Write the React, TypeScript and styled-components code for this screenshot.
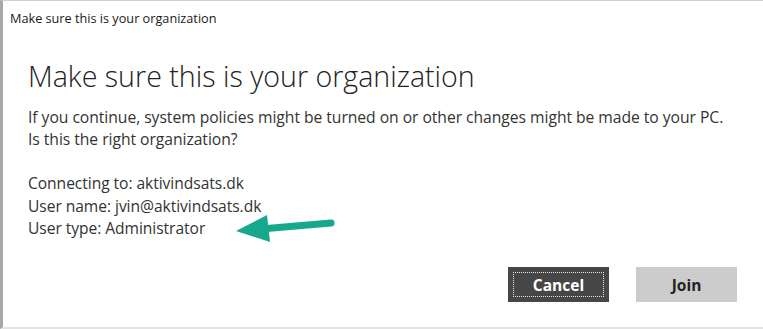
import React from "react";
import styled, { createGlobalStyle } from "styled-components";

const Global = createGlobalStyle`
  html, body { margin: 0; padding: 0; background: #fff; }
  body { font-family: "Open Sans", "Noto Sans", sans-serif; }
`;

const Window = styled.div`
  position: relative;
  width: 763px;
  height: 329px;
  box-sizing: border-box;
  border-left: 3px solid #a8a8a8;
  border-top: 1px solid #d0d0d0;
  border-bottom: 2px solid #e3e3e3;
  background: #fff;
  display: flex;
  flex-direction: column;
`;

const TitleBar = styled.div`
  height: 34px;
  padding: 8px 0 0 7px;
  box-sizing: border-box;
  font-size: 12.7px;
  color: #1a1a1a;
`;

const Body = styled.div`
  flex: 1;
  padding: 22px 0 0 25px;
  display: flex;
  flex-direction: column;
`;

const Heading = styled.h1`
  margin: 0;
  font-size: 28.6px;
  font-weight: 300;
  color: #222;
  line-height: 38px;
`;

const Para = styled.p`
  margin: 11px 0 0;
  font-size: 15.7px;
  line-height: 22px;
  color: #333;
  letter-spacing: -0.05px;
`;

const Info = styled.div`
  margin-top: 22px;
  font-size: 15.6px;
  line-height: 22.5px;
  color: #333;
  letter-spacing: -0.05px;
`;

const Footer = styled.div`
  display: flex;
  justify-content: flex-end;
  gap: 27px;
  padding: 0 26px 25px 0;
`;

const Button = styled.button<{ $primary?: boolean }>`
  width: 101px;
  height: 35px;
  border: none;
  font-family: "Open Sans", "Noto Sans", sans-serif;
  font-size: 15.5px;
  font-weight: 700;
  background: ${(p) => (p.$primary ? "#464646" : "#cccccc")};
  color: ${(p) => (p.$primary ? "#fff" : "#222")};
  outline: ${(p) => (p.$primary ? "1px dotted #e8e8e8" : "none")};
  outline-offset: -6px;
  padding: 0;
`;

const Arrow = styled.svg`
  position: absolute;
  left: 228px;
  top: 208px;
`;

export default function App() {
  return (
    <>
      <Global />
      <Window>
        <TitleBar>Make sure this is your organization</TitleBar>
        <Body>
          <Heading>Make sure this is your organization</Heading>
          <Para>
            If you continue, system policies might be turned on or other changes might be made to your PC.
            <br />
            Is this the right organization?
          </Para>
          <Info>
            Connecting to: aktivindsats.dk
            <br />
            User name: jvin@aktivindsats.dk
            <br />
            User type: Administrator
          </Info>
        </Body>
        <Footer>
          <Button $primary>Cancel</Button>
          <Button>Join</Button>
        </Footer>
        <Arrow width="110" height="40" viewBox="0 0 110 40">
          <line x1="30" y1="20" x2="100" y2="14" stroke="#16a88c" strokeWidth="7" strokeLinecap="round" />
          <polygon points="5,22 36,6 39,33" fill="#16a88c" />
        </Arrow>
      </Window>
    </>
  );
}
